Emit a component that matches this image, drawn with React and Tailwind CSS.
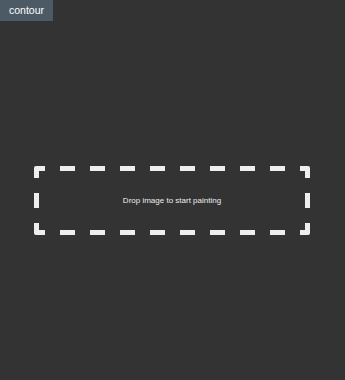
function DashedFrame() {
  const W = 276;
  const H = 69;
  const t = 5;
  const hd = [];
  for (let k = 0; k < 8; k++) hd.push(26 + 30 * k);
  const c = "#eeeeee";
  return (
    <svg className="absolute inset-0" width={W} height={H} viewBox={`0 0 ${W} ${H}`}>
      {/* corners */}
      <path d={`M2 0 H11 V${t} H${t} V12 H0 V2 Q0 0 2 0 Z`} fill={c} />
      <path d={`M${W - 2} 0 H${W - 10} V${t} H${W - t} V12 H${W} V2 Q${W} 0 ${W - 2} 0 Z`} fill={c} />
      <path d={`M2 ${H} H11 V${H - t} H${t} V${H - 12} H0 V${H - 2} Q0 ${H} 2 ${H} Z`} fill={c} />
      <path d={`M${W - 2} ${H} H${W - 10} V${H - t} H${W - t} V${H - 12} H${W} V${H - 2} Q${W} ${H} ${W - 2} ${H} Z`} fill={c} />
      {hd.map((x) => (
        <rect key={"t" + x} x={x} y={0} width={15} height={t} fill={c} />
      ))}
      {hd.map((x) => (
        <rect key={"b" + x} x={x} y={H - t} width={15} height={t} fill={c} />
      ))}
      <rect x={0} y={27} width={t} height={15} fill={c} />
      <rect x={W - t} y={27} width={t} height={15} fill={c} />
    </svg>
  );
}

export default function App() {
  return (
    <div className="w-[345px] h-[380px] bg-[#333333] flex flex-col" style={{ fontFamily: '"Liberation Sans", Arial, sans-serif' }}>
      <div className="flex">
        <div className="h-[21px] w-[53px] flex items-center justify-center bg-[#4b5a64] text-white text-[10.5px]">contour</div>
      </div>
      <div className="flex-1 flex items-center">
        <div className="relative ml-[34px] w-[276px] h-[69px] flex items-center justify-center text-[#eeeeee] text-[8px]">
          <DashedFrame />
          <span className="relative">Drop image to start painting</span>
        </div>
      </div>
    </div>
  );
}
